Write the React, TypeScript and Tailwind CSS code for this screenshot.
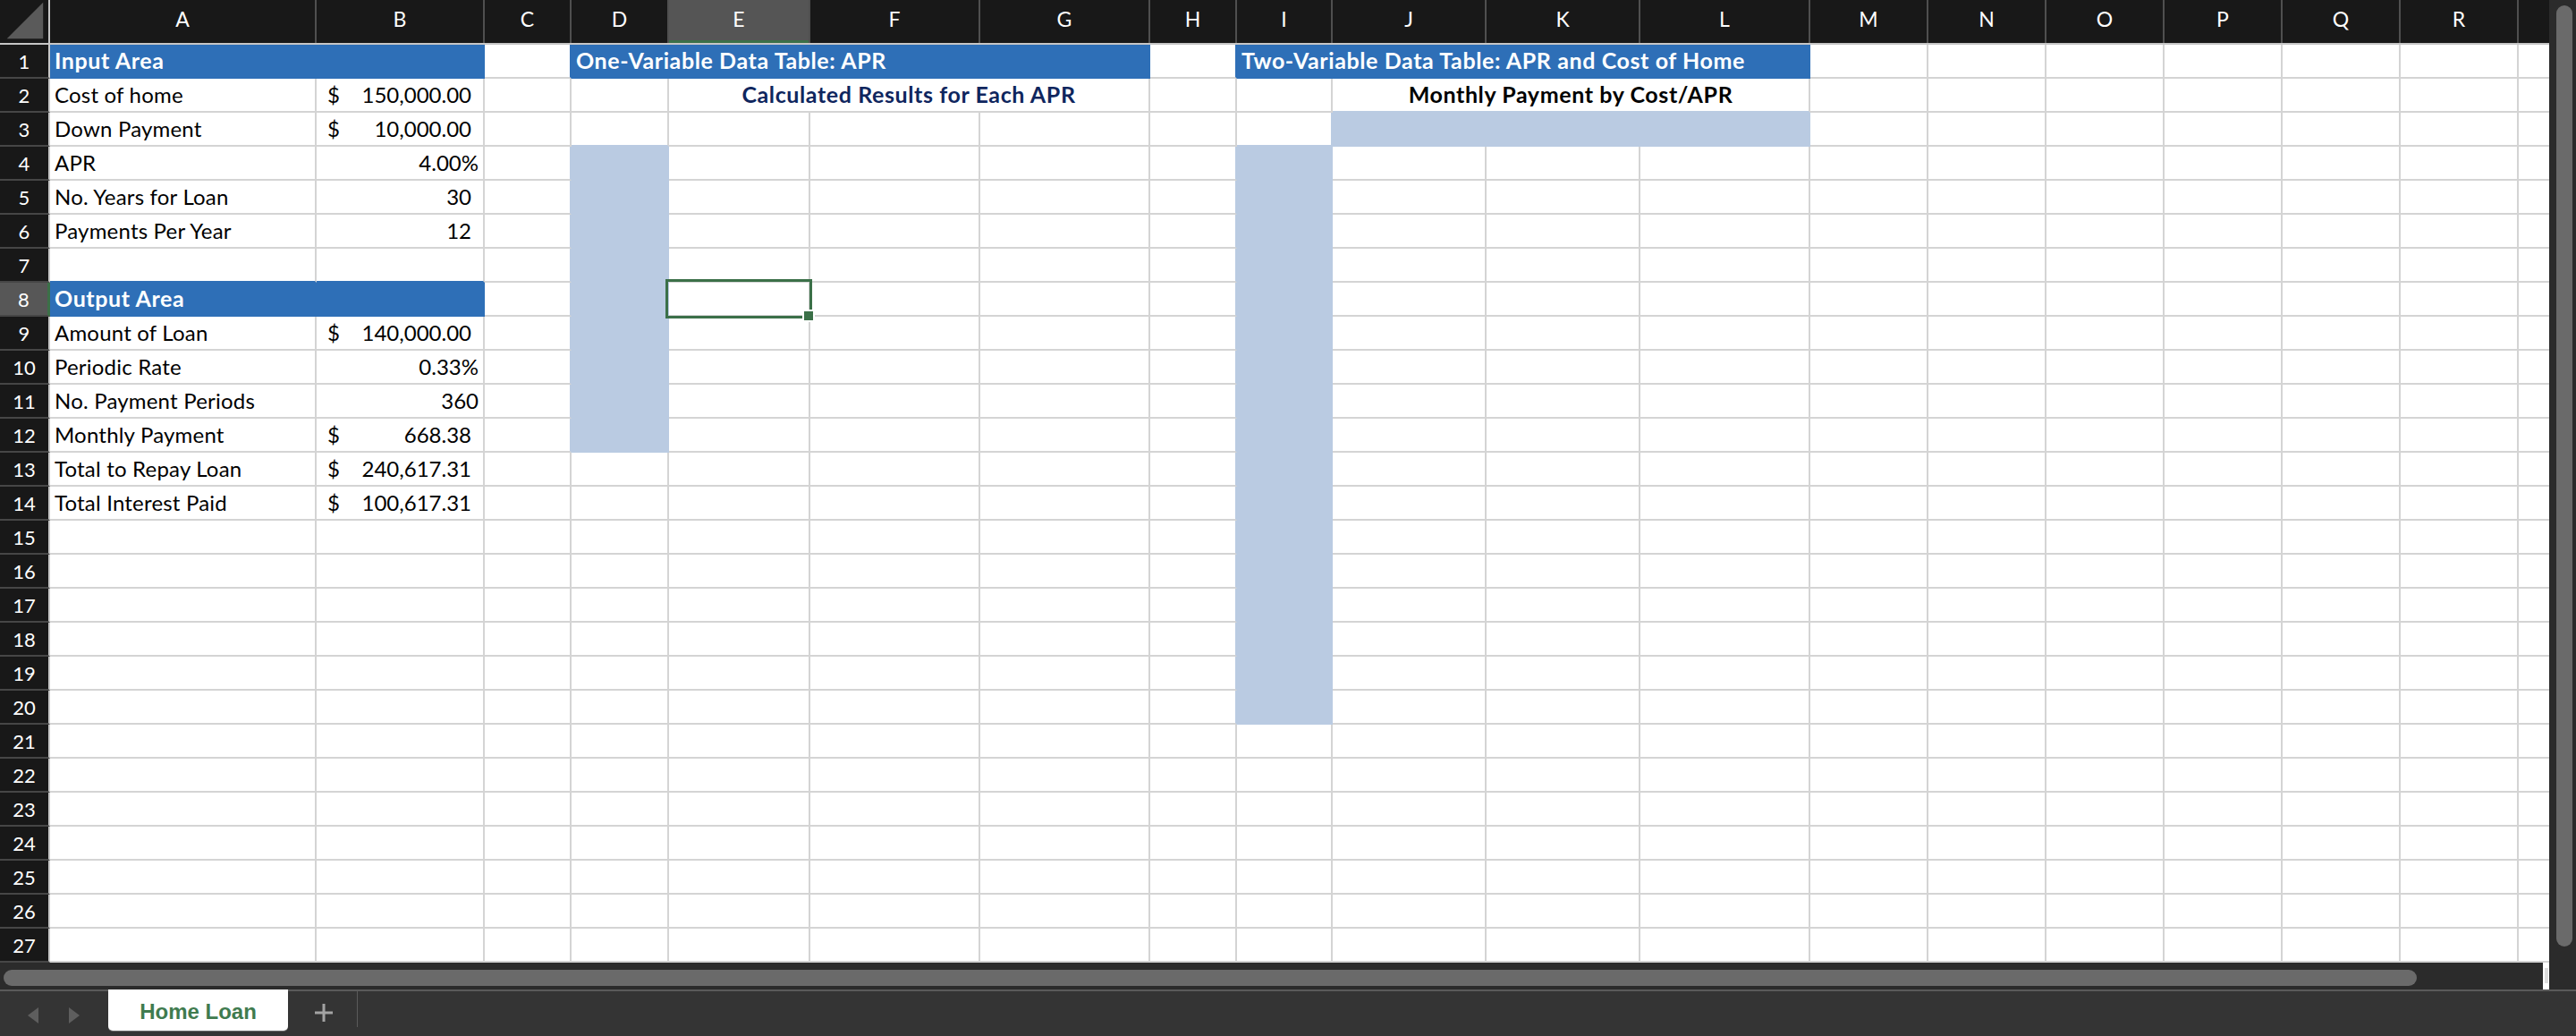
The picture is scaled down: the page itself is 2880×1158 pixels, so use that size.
import type { ReactNode } from "react";

// ── Sheet geometry ────────────────────────────────────────────────────────────

type Fill = "none" | "blue" | "light";

const COLS = [
  { id: "A", w: "w-[298px]" },
  { id: "B", w: "w-[188px]" },
  { id: "C", w: "w-[97px]" },
  { id: "D", w: "w-[109px]" },
  { id: "E", w: "w-[158px]" },
  { id: "F", w: "w-[190px]" },
  { id: "G", w: "w-[190px]" },
  { id: "H", w: "w-[97px]" },
  { id: "I", w: "w-[107px]" },
  { id: "J", w: "w-[172px]" },
  { id: "K", w: "w-[172px]" },
  { id: "L", w: "w-[190px]" },
  { id: "M", w: "w-[132px]" },
  { id: "N", w: "w-[132px]" },
  { id: "O", w: "w-[132px]" },
  { id: "P", w: "w-[132px]" },
  { id: "Q", w: "w-[132px]" },
  { id: "R", w: "w-[132px]" },
  { id: "", w: "w-[34px]" },
];

const LAST = COLS.length - 1;
const ROWS = Array.from({ length: 27 }, (_, i) => i + 1);

const MERGES = [
  { r: 1, c0: 0, c1: 1, w: "w-[486px]" },
  { r: 1, c0: 3, c1: 6, w: "w-[647px]" },
  { r: 1, c0: 8, c1: 11, w: "w-[641px]" },
  { r: 2, c0: 4, c1: 6, w: "w-[538px]" },
  { r: 2, c0: 9, c1: 11, w: "w-[534px]" },
  { r: 3, c0: 9, c1: 11, w: "w-[534px]" },
  { r: 8, c0: 0, c1: 1, w: "w-[486px]" },
];

const BG: Record<Fill, string> = {
  none: "bg-white",
  blue: "bg-[#2e6fb7]",
  light: "bg-[#bacbe2]",
};
const RIGHT: Record<Fill, string> = {
  none: "border-r-[#d4d4d4]",
  blue: "border-r-[#2e6fb7]",
  light: "border-r-[#bacbe2]",
};
const BOTTOM: Record<Fill, string> = {
  none: "border-b-[#d4d4d4]",
  blue: "border-b-[#2e6fb7]",
  light: "border-b-[#bacbe2]",
};

function fillAt(r: number, c: number): Fill {
  if (r === 1 && (c <= 1 || (c >= 3 && c <= 6) || (c >= 8 && c <= 11))) return "blue";
  if (r === 8 && c <= 1) return "blue";
  if (r === 3 && c >= 9 && c <= 11) return "light";
  if (c === 3 && r >= 4 && r <= 12) return "light";
  if (c === 8 && r >= 4 && r <= 20) return "light";
  return "none";
}

// ── Cell contents ─────────────────────────────────────────────────────────────

const LABELS: Record<number, string> = {
  2: "Cost of home",
  3: "Down Payment",
  4: "APR",
  5: "No. Years for Loan",
  6: "Payments Per Year",
  9: "Amount of Loan",
  10: "Periodic Rate",
  11: "No. Payment Periods",
  12: "Monthly Payment",
  13: "Total to Repay Loan",
  14: "Total Interest Paid",
};

const VALUES: Record<number, { kind: "usd" | "num" | "gen"; v: string }> = {
  2: { kind: "usd", v: "150,000.00" },
  3: { kind: "usd", v: "10,000.00" },
  4: { kind: "gen", v: "4.00%" },
  5: { kind: "num", v: "30" },
  6: { kind: "num", v: "12" },
  9: { kind: "usd", v: "140,000.00" },
  10: { kind: "gen", v: "0.33%" },
  11: { kind: "gen", v: "360" },
  12: { kind: "usd", v: "668.38" },
  13: { kind: "usd", v: "240,617.31" },
  14: { kind: "usd", v: "100,617.31" },
};

function Banner({ children }: { children: ReactNode }) {
  return <span className="pl-[5px] text-[25px] font-bold tracking-[0.6px] text-white">{children}</span>;
}

function cellContent(r: number, c: number): ReactNode {
  if (r === 1 && c === 0) return <Banner>Input Area</Banner>;
  if (r === 1 && c === 3) return <Banner>One-Variable Data Table: APR</Banner>;
  if (r === 1 && c === 8) return <Banner>Two-Variable Data Table: APR and Cost of Home</Banner>;
  if (r === 8 && c === 0) return <Banner>Output Area</Banner>;
  if (r === 2 && c === 4)
    return (
      <span className="w-full text-center text-[25px] font-bold tracking-[0.6px] text-[#0f265e]">
        Calculated Results for Each APR
      </span>
    );
  if (r === 2 && c === 9)
    return (
      <span className="w-full text-center text-[25px] font-bold tracking-[0.6px] text-black">
        Monthly Payment by Cost/APR
      </span>
    );
  if (c === 0 && LABELS[r]) return <span className="pl-[5px] tracking-[0.2px] text-black">{LABELS[r]}</span>;
  if (c === 1 && VALUES[r]) {
    const { kind, v } = VALUES[r];
    if (kind === "usd")
      return (
        <span className="flex w-full justify-between pl-[12px] pr-[13px] text-black">
          <span>$</span>
          <span>{v}</span>
        </span>
      );
    return (
      <span className={kind === "num" ? "w-full pr-[13px] text-right text-black" : "w-full pr-[5px] text-right text-black"}>
        {v}
      </span>
    );
  }
  return null;
}

// ── Grid row ──────────────────────────────────────────────────────────────────

function SheetRow({ r }: { r: number }) {
  const cells: ReactNode[] = [];
  let c = 0;
  while (c <= LAST) {
    const m = MERGES.find((x) => x.r === r && x.c0 === c);
    const c0 = c;
    const c1 = m ? m.c1 : c;
    const w = m ? m.w : COLS[c].w;
    const fill = fillAt(r, c0);
    const rightFill: Fill = fill !== "none" ? fill : c1 < LAST ? fillAt(r, c1 + 1) : "none";
    let bottomFill: Fill = fill;
    if (fill === "none" && r < 27) {
      for (let k = c0; k <= c1; k++) {
        const f = fillAt(r + 1, k);
        if (f !== "none") {
          bottomFill = f;
          break;
        }
      }
    }
    const selected = r === 8 && c0 === 4;

    cells.push(
      <div
        key={c0}
        className={`relative flex h-full shrink-0 items-center whitespace-nowrap border-b-2 ${w} ${BG[fill]} ${BOTTOM[bottomFill]} ${
          c1 < LAST ? `border-r-2 ${RIGHT[rightFill]}` : ""
        }`}
      >
        {cellContent(r, c0)}
        {selected && (
          <>
            <div className="absolute left-[-4px] top-[-4px] z-10 h-[44px] w-[164px] border-[3px] border-[#3b7048]" />
            <div className="absolute left-[149px] top-[30px] z-20 h-[14px] w-[14px] border-2 border-white bg-[#3b7048]" />
          </>
        )}
      </div>,
    );
    c = c1 + 1;
  }

  return (
    <div className="flex h-[38px]">
      <div
        className={`flex h-full w-[56px] shrink-0 items-center justify-center border-b-2 border-b-[#464646] text-[22px] text-white ${
          r === 8 ? "border-r-[3px] border-r-[#3b7048] bg-[#575757]" : "border-r-2 border-r-[#c8c8c8] bg-[#181818]"
        }`}
      >
        {r}
      </div>
      {cells}
    </div>
  );
}

// ── Header ────────────────────────────────────────────────────────────────────

function ColumnHeader() {
  return (
    <div className="flex h-[50px] border-b-2 border-b-[#c6c6c6] bg-[#181818]">
      <div className="flex h-full w-[56px] shrink-0 items-center justify-center border-r-2 border-r-[#c6c6c6]">
        <svg width="56" height="48" viewBox="0 0 56 48">
          <polygon points="50,2 50,44 8,44" fill="#5a5a5a" />
        </svg>
      </div>
      {COLS.map((col, i) => (
        <div
          key={i}
          className={`relative flex h-full shrink-0 items-center justify-center pb-[5px] text-[23px] text-white ${col.w} ${
            i < LAST ? "border-r-2 border-r-[#4f4f4f]" : ""
          } ${col.id === "E" ? "bg-[#555555]" : ""}`}
        >
          {col.id}
          {col.id === "E" && <div className="absolute inset-x-0 bottom-0 h-[3px] bg-[#3b7048]" />}
        </div>
      ))}
    </div>
  );
}

// ── Sheet tabs ────────────────────────────────────────────────────────────────

function SheetTabs() {
  return (
    <div className="flex h-[52px] items-start border-t-2 border-t-[#5a5a5a] bg-[#343434] pl-[30px]">
      <svg className="mt-[18px]" width="14" height="18" viewBox="0 0 14 18">
        <polygon points="13,0 13,18 1,9" fill="#5e5e5e" />
      </svg>
      <svg className="ml-[32px] mt-[18px]" width="14" height="18" viewBox="0 0 14 18">
        <polygon points="1,0 1,18 13,9" fill="#5e5e5e" />
      </svg>
      <div className="-mt-[2px] ml-[31px] flex h-[46px] w-[201px] items-center justify-center rounded-b-[5px] bg-white pt-[4px] font-['Liberation_Sans',sans-serif] text-[24px] font-bold text-[#3f7b4f] shadow-[0_1px_0_#6a6a6a]">
        Home Loan
      </div>
      <svg className="ml-[30px] mt-[14px]" width="20" height="20" viewBox="0 0 20 20">
        <path d="M10 0v20M0 10h20" stroke="#a3a3a3" strokeWidth="3" />
      </svg>
      <div className="ml-[27px] h-[40px] w-px bg-[#5a5a5a]" />
    </div>
  );
}

// ── App ───────────────────────────────────────────────────────────────────────

export default function App() {
  return (
    <div className="flex h-[1158px] w-[2880px] flex-col overflow-hidden bg-[#2b2b2b] font-['Lato',sans-serif] text-[24px]">
      <div className="flex h-[1106px]">
        <div className="flex w-[2850px] flex-col">
          <ColumnHeader />
          {ROWS.map((r) => (
            <SheetRow key={r} r={r} />
          ))}
          <div className="flex h-[30px] items-start bg-[#2b2b2b] pl-[4px]">
            <div className="mt-[8px] h-[18px] w-[2698px] rounded-full bg-[#6a6a6a]" />
            <div className="ml-auto flex h-full w-[7px] justify-center bg-white pt-[6px]">
              <div className="h-[17px] w-[4px] bg-[#dcdcdc]" />
            </div>
          </div>
        </div>
        <div className="flex w-[30px] flex-col bg-[#2b2b2b] pl-[8px] pt-[6px]">
          <div className="h-[1052px] w-[18px] rounded-full bg-[#6a6a6a]" />
        </div>
      </div>
      <SheetTabs />
    </div>
  );
}
